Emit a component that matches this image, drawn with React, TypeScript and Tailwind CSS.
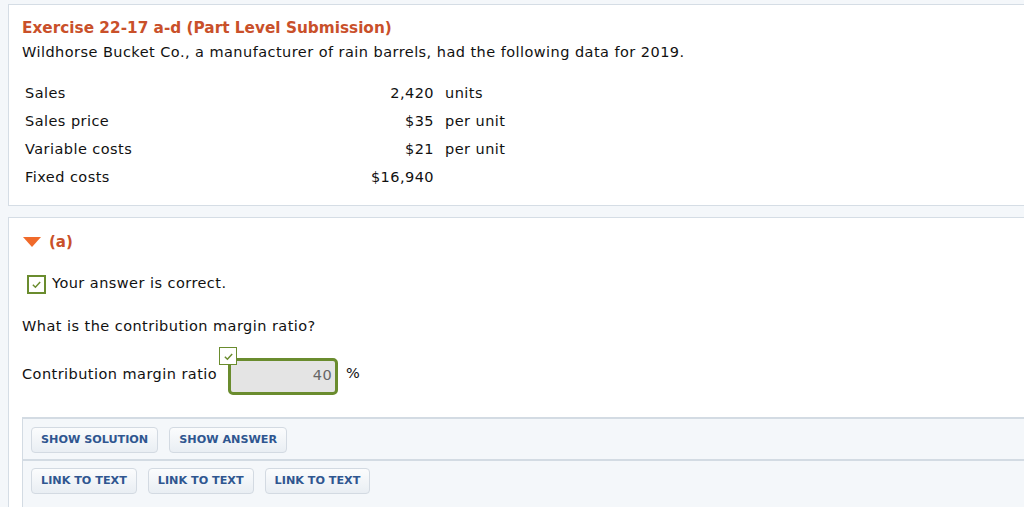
import { useState } from 'react'

const rows = [
  { label: 'Sales', value: '2,420', unit: 'units' },
  { label: 'Sales price', value: '$35', unit: 'per unit' },
  { label: 'Variable costs', value: '$21', unit: 'per unit' },
  { label: 'Fixed costs', value: '$16,940', unit: '' },
]

function Check({ size = 'md' }: { size?: 'sm' | 'md' }) {
  const box = size === 'sm' ? 'w-[18px] h-[18px] border-[1.5px]' : 'w-[19px] h-[19px] border-2'
  return (
    <span className={`${box} inline-flex items-center justify-center border-[#6a8c2e] bg-white shrink-0`}>
      <svg viewBox="0 0 12 12" className="w-[11px] h-[11px]">
        <path d="M2 6.3 L4.8 9 L10 3.2" fill="none" stroke="#6a8c2e" strokeWidth="1.6" />
      </svg>
    </span>
  )
}

function Btn({ children }: { children: string }) {
  return (
    <button className="h-[26px] px-[9px] rounded-[4px] border border-[#d3dae2] bg-gradient-to-b from-[#fbfcfd] to-[#e9eef3] text-[11.2px] tracking-normal font-bold text-[#2f5690] leading-none">
      {children}
    </button>
  )
}

export default function App() {
  const [open] = useState(true)
  return (
    <div className="w-[1024px] h-[507px] overflow-hidden bg-[#f4f7fa] pt-[4px] pl-[8px] text-[#111] font-['DejaVu_Sans',Verdana,sans-serif] text-[14.5px] tracking-[0.45px]">
      <div className="bg-white border border-[#d5dde5] border-r-0 h-[202px] pl-[13px] pt-[14px]">
        <h1 className="text-[15.3px] tracking-normal font-bold text-[#c9502a] leading-[18px]">
          Exercise 22-17 a-d (Part Level Submission)
        </h1>
        <p className="mt-[6px] leading-[18px]">
          Wildhorse Bucket Co., a manufacturer of rain barrels, had the following data for 2019.
        </p>
        <div className="mt-[19px] pl-[3px] flex flex-col">
          {rows.map((r) => (
            <div key={r.label} className="flex h-[28px] items-center">
              <span className="w-[345px]">{r.label}</span>
              <span className="w-[64px] text-right">{r.value}</span>
              <span className="pl-[11px]">{r.unit}</span>
            </div>
          ))}
        </div>
      </div>

      <div className="mt-[11px] bg-white border border-[#d5dde5] border-r-0 h-[300px] pl-[13px] pt-[14px]">
        <div className="flex items-center gap-[8px] h-[20px]">
          <svg viewBox="0 0 18 10" className="w-[18px] h-[10px] ml-[1px]">
            <path d="M0 0 H18 L9 10 Z" fill="#f06a2a" />
          </svg>
          <span className="text-[15px] tracking-normal font-bold text-[#c9502a]">{open ? '(a)' : ''}</span>
        </div>
        <div className="mt-[22px] flex items-center gap-[6px] pl-[5px] h-[20px]">
          <Check />
          <span>Your answer is correct.</span>
        </div>
        <p className="mt-[22px] leading-[20px]">What is the contribution margin ratio?</p>
        <div className="mt-[14px] flex items-center h-[40px]">
          <span className="mt-[10px]">Contribution margin ratio</span>
          <div className="relative ml-[11px] mt-[12px]">
            <span className="absolute -left-[9px] -top-[11px]">
              <Check size="sm" />
            </span>
            <div className="w-[110px] h-[37px] rounded-[5px] border-[3px] border-[#6a8c2e] bg-[#e4e4e4] flex items-center justify-end pr-[3px] text-[#666]">
              40
            </div>
          </div>
          <span className="ml-[8px] mt-[8px]">%</span>
        </div>
        <div className="mt-[27px] bg-[#f4f7fa] border-t-2 border-l border-[#d3dbe3] h-[100px]">
          <div className="flex gap-[11px] pl-[8px] pt-[8px] pb-[6px] border-b-2 border-[#d3dbe3]">
            <Btn>SHOW SOLUTION</Btn>
            <Btn>SHOW ANSWER</Btn>
          </div>
          <div className="flex gap-[11px] pl-[8px] pt-[7px]">
            <Btn>LINK TO TEXT</Btn>
            <Btn>LINK TO TEXT</Btn>
            <Btn>LINK TO TEXT</Btn>
          </div>
        </div>
      </div>
    </div>
  )
}
